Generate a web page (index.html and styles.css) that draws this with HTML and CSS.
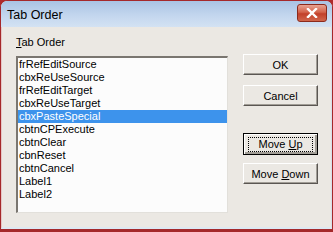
FILE: index.html
```html
<!DOCTYPE html>
<html lang="en">
<head>
  <meta charset="UTF-8" />
  <title>Tab Order</title>
  <link rel="stylesheet" href="styles.css">
</head>
<body>
  <div class="window">
    <div class="titlebar">
      <span class="title">Tab Order</span>
      <div class="close-btn">
        <svg width="12" height="10" viewBox="0 0 12 10">
          <path d="M2 1 L10 9 M10 1 L2 9" stroke="#fff" stroke-width="2.4" stroke-linecap="square" fill="none"/>
        </svg>
      </div>
    </div>

    <div class="client">
      <div class="left-col">
        <div class="label"><u>T</u>ab Order</div>
        <div class="listbox">
          <div class="item">frRefEditSource</div>
          <div class="item">cbxReUseSource</div>
          <div class="item">frRefEditTarget</div>
          <div class="item">cbxReUseTarget</div>
          <div class="item selected">cbxPasteSpecial</div>
          <div class="item">cbtnCPExecute</div>
          <div class="item">cbtnClear</div>
          <div class="item">cbnReset</div>
          <div class="item">cbtnCancel</div>
          <div class="item">Label1</div>
          <div class="item">Label2</div>
        </div>
      </div>

      <div class="right-col">
        <div class="btn"><span>OK</span></div>
        <div class="btn"><span>Cancel</span></div>
        <div class="btn focused spaced"><span class="focus-ring"><span>Move <u>U</u>p</span></span></div>
        <div class="btn"><span>Move <u>D</u>own</span></div>
      </div>
    </div>
  </div>
</body>
</html>
```

FILE: styles.css
```css
body {
  margin: 0;
  background: #b02a2c;
  font-family: "Liberation Sans", Arial, sans-serif;
  font-size: 11px;
  color: #000;
}

.window {
  width: 333px;
  height: 232px;
  box-sizing: border-box;
  border: 1px solid #a5282a;
  border-bottom-width: 3px;
  border-radius: 7px 7px 0 0;
  background: #ebe8e3;
  display: flex;
  flex-direction: column;
  overflow: hidden;
}

.titlebar {
  height: 26px;
  flex: none;
  display: flex;
  align-items: center;
  padding: 0 5px 0 6px;
  background: linear-gradient(#a9c3e3, #c3d6ee 55%, #d3e2f3);
}

.title {
  font-size: 12.5px;
  color: #000;
  padding-top: 1px;
}

.close-btn {
  margin-left: auto;
  width: 30px;
  height: 18px;
  box-sizing: border-box;
  border: 1px solid #8c2a1c;
  border-radius: 3px;
  background: linear-gradient(#e8a392, #d3634b 45%, #c2402a 55%, #d0664c);
  display: flex;
  align-items: center;
  justify-content: center;
  margin-top: -2px;
}

.client {
  flex: 1;
  display: flex;
  padding: 0 13px 0 14px;
  border-left: 1px solid #e6c6c6;
  border-right: 1px solid #d6e0ea;
  border-bottom: 2px solid #dde8f2;
}

.left-col {
  width: 212px;
  padding-top: 9px;
}

.label {
  height: 13px;
  line-height: 13px;
  margin-bottom: 7px;
}

.listbox {
  height: 157px;
  box-sizing: border-box;
  background: #fcfcfc;
  border-top: 2px solid #7a7670;
  border-left: 2px solid #7a7670;
  border-right: 1px solid #e2e0db;
  border-bottom: 1px solid #e2e0db;
}

.item {
  height: 13px;
  line-height: 13px;
  padding-left: 1px;
  white-space: nowrap;
}

.item.selected {
  background: #3d93ec;
  color: #fff;
}

.right-col {
  margin-left: auto;
  width: 75px;
  padding-top: 27px;
  display: flex;
  flex-direction: column;
}

.btn {
  height: 21px;
  box-sizing: border-box;
  border: 1px solid;
  border-color: #fff #5a5652 #5a5652 #fff;
  box-shadow: inset -1px -1px 0 #a19d96;
  background: #ebe8e3;
  display: flex;
  align-items: center;
  justify-content: center;
  margin-bottom: 10px;
  white-space: pre;
}

.btn.spaced {
  margin-top: 17px;
}

.btn.focused {
  height: 22px;
  border: 1px solid #000;
  box-shadow: inset 1px 1px 0 #fff, inset -2px -2px 0 #a19d96;
  margin-bottom: 8px;
}

.focus-ring {
  box-sizing: border-box;
  width: 65px;
  height: 15px;
  border: 1px dotted #000;
  display: flex;
  align-items: center;
  justify-content: center;
}
```
